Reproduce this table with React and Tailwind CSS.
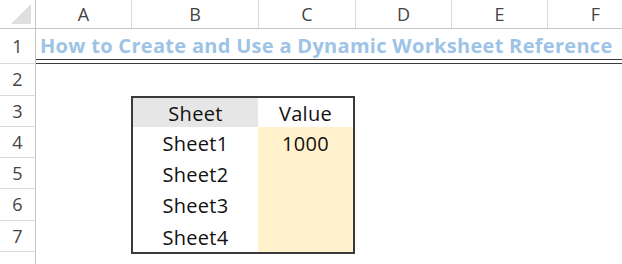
import React from "react";

const cols = [
  { l: "A", w: "w-[96px]" },
  { l: "B", w: "w-[127px]" },
  { l: "C", w: "w-[97px]" },
  { l: "D", w: "w-[96px]" },
  { l: "E", w: "w-[96px]" },
  { l: "F", w: "w-[96px]" },
];

const rows = [
  { n: "2", h: "h-[32px]" },
  { n: "3", h: "h-[31px]" },
  { n: "4", h: "h-[31px]" },
  { n: "5", h: "h-[31px]" },
  { n: "6", h: "h-[32px]" },
  { n: "7", h: "h-[31px]" },
  { n: "", h: "h-[31px]" },
];

function RowHead({ n, h }) {
  return (
    <div className={`w-[36px] shrink-0 ${h} border-r border-r-[#c6c6c6] border-b border-b-[#dadada] bg-white flex items-center justify-center text-[18px] text-[#444]`}>
      {n}
    </div>
  );
}

export default function App() {
  return (
    <div className="w-[622px] h-[264px] overflow-hidden bg-white font-['Open_Sans','Liberation_Sans',sans-serif] text-[#222]">
      {/* column headers */}
      <div className="flex h-[29px] border-b border-b-[#c6c6c6]">
        <div className="w-[36px] shrink-0 border-r border-r-[#c6c6c6] relative">
          <div className="absolute right-[4px] bottom-[4px] w-0 h-0 border-l-[20px] border-l-transparent border-b-[20px] border-b-[#dfdfdf]" />
        </div>
        {cols.map((c) => (
          <div
            key={c.l}
            className={`${c.w} shrink-0 border-r border-r-[#dadada] flex items-center justify-center text-[18px] text-[#444]`}
          >
            {c.l}
          </div>
        ))}
      </div>
      {/* row 1 */}
      <div className="flex h-[35px]">
        <div className="w-[36px] shrink-0 border-r border-r-[#c6c6c6] border-b border-b-[#dadada] flex items-center justify-center text-[18px] text-[#444]">
          1
        </div>
        <div className="flex-1 relative">
          <div className="absolute left-[4px] top-[2px] whitespace-nowrap font-bold text-[20px] tracking-[0.3px] text-[#9dc3e6]">
            How to Create and Use a Dynamic Worksheet Reference
          </div>
          <div className="absolute left-0 right-0 bottom-[0px] h-[5px] border-t border-b border-[#3a3a3a]" />
        </div>
      </div>
      {/* rows 2-8 */}
      <div className="flex">
        <div className="flex flex-col">
          {rows.map((r, i) => (
            <RowHead key={i} n={r.n} h={r.h} />
          ))}
        </div>
        <div className="flex-1 flex flex-col">
          <div className="h-[32px]" />
          <div className="ml-[95px] w-[224px] border-2 border-[#3a3a3a] text-[20px] tracking-[0.3px] text-[#111]">
            <div className="flex h-[29px]">
              <div className="w-[125px] bg-[#e6e6e6] flex items-center justify-center pt-[2px]">Sheet</div>
              <div className="flex-1 flex items-center justify-center pt-[2px]">Value</div>
            </div>
            {[
              ["Sheet1", "1000"],
              ["Sheet2", ""],
              ["Sheet3", ""],
              ["Sheet4", ""],
            ].map(([s, v], i) => (
              <div key={s} className={`flex ${i === 2 ? "h-[32px]" : "h-[31px]"}`}>
                <div className="w-[125px] flex items-center justify-center pt-[2px]">{s}</div>
                <div className="flex-1 bg-[#fff2cc] flex items-center justify-center pt-[2px]">{v}</div>
              </div>
            ))}
          </div>
        </div>
      </div>
    </div>
  );
}
